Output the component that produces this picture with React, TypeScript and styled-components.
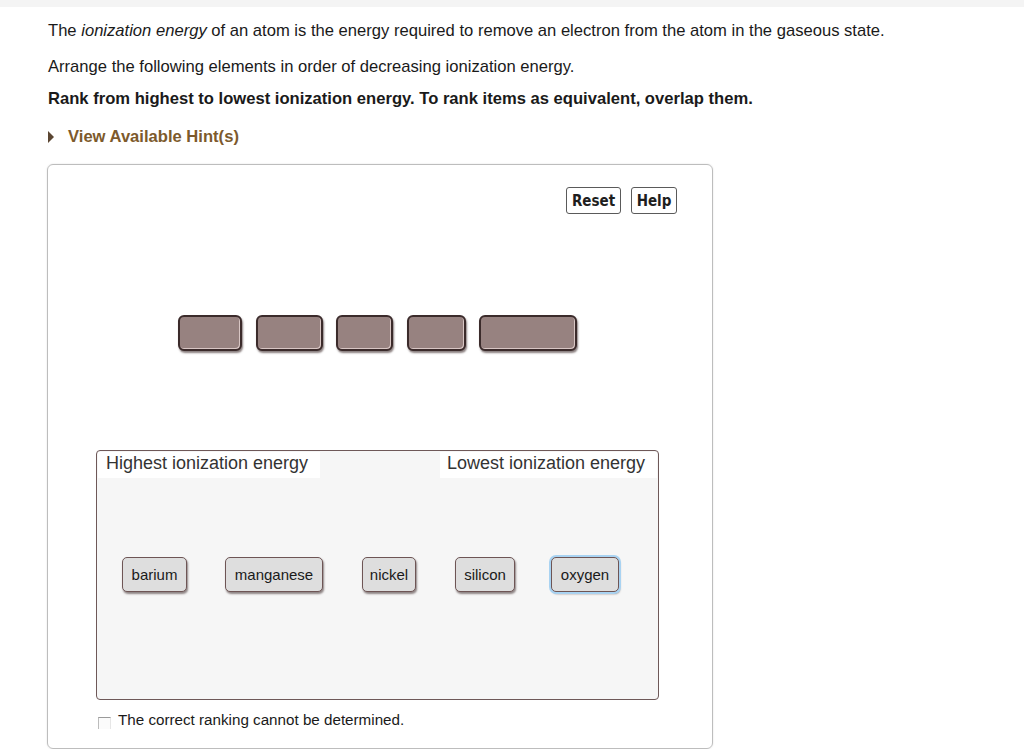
import React, { useState } from "react";
import styled, { createGlobalStyle } from "styled-components";

const GlobalStyle = createGlobalStyle`
  html, body {
    margin: 0;
    padding: 0;
    background: #ffffff;
    font-family: "Liberation Sans", Arial, Helvetica, sans-serif;
    color: #1a1a1a;
  }
`;

const TopBand = styled.div`
  height: 7px;
  background: #f4f4f4;
`;

const Content = styled.div`
  padding: 13px 0 0 48px;
`;

const Para = styled.p<{ $bold?: boolean; $gap?: number }>`
  margin: 0 0 ${(p) => p.$gap ?? 0}px;
  font-size: 16.6px;
  line-height: 22px;
  font-weight: ${(p) => (p.$bold ? "bold" : "normal")};
`;

const HintToggle = styled.button`
  display: flex;
  align-items: center;
  gap: 14px;
  margin: 0 0 16px;
  padding: 0;
  border: none;
  background: none;
  font-family: "Liberation Sans", Arial, sans-serif;
  font-size: 16.6px;
  font-weight: bold;
  color: #7d5a2c;
  line-height: 22px;
  cursor: pointer;
`;

const Triangle = styled.span`
  width: 0;
  height: 0;
  border-top: 6px solid transparent;
  border-bottom: 6px solid transparent;
  border-left: 6px solid #5b4632;
`;

const Panel = styled.div`
  margin-left: -1px;
  width: 666px;
  height: 585px;
  border: 1px solid #bdbdbd;
  border-radius: 6px;
  box-shadow: 0 0 2px rgba(0, 0, 0, 0.12);
  display: flex;
  flex-direction: column;
  box-sizing: border-box;
`;

const ToolRow = styled.div`
  display: flex;
  justify-content: flex-end;
  gap: 10px;
  padding: 22px 35px 0 0;
`;

const ToolButton = styled.button<{ $w: number }>`
  width: ${(p) => p.$w}px;
  height: 27px;
  padding: 0;
  border: 1px solid #5a5a5a;
  border-radius: 3px;
  background: #ffffff;
  font-family: "Liberation Sans Narrow", "DejaVu Sans Condensed", "Liberation Sans", sans-serif;
  font-weight: bold;
  font-size: 15px;
  color: #1e1e1e;
  cursor: pointer;
`;

const SlotRow = styled.div`
  display: flex;
  gap: 13.5px;
  padding: 101px 0 0 130px;
`;

const Slot = styled.div<{ $w: number }>`
  width: ${(p) => p.$w}px;
  height: 36px;
  box-sizing: border-box;
  background: #978280;
  border: 2px solid #3b2b2b;
  border-radius: 6px;
  box-shadow: 1px 2px 2px rgba(40, 20, 20, 0.55), inset -1px -1px 0 #d8c6c4;
`;

const Zone = styled.div`
  margin: 99px 0 0 48px;
  width: 563px;
  height: 250px;
  box-sizing: border-box;
  border: 1px solid #6e5858;
  border-radius: 4px;
  background: #f6f6f6;
  display: flex;
  flex-direction: column;
`;

const LabelRow = styled.div`
  display: flex;
  justify-content: space-between;
  padding: 1px 1px 0 1px;
`;

const ZoneLabel = styled.div<{ $w: number; $pad: number }>`
  width: ${(p) => p.$w}px;
  box-sizing: border-box;
  padding-left: ${(p) => p.$pad}px;
  height: 26px;
  line-height: 23px;
  background: #ffffff;
  font-size: 18px;
  color: #333333;
  white-space: nowrap;
`;

const ItemRow = styled.div`
  display: flex;
  padding: 79px 0 0 25px;
`;

const Item = styled.button<{ $w: number; $x: number; $focus?: boolean }>`
  width: ${(p) => p.$w}px;
  margin-left: ${(p) => p.$x}px;
  height: 35px;
  padding: 0;
  box-sizing: border-box;
  background: #dedede;
  border: 1px solid #6e5555;
  border-radius: 5px;
  font-family: "Liberation Sans", Arial, sans-serif;
  font-size: 15px;
  color: #1a1a1a;
  cursor: grab;
  box-shadow: ${(p) =>
    p.$focus
      ? "0 0 0 2px #a9d3f2, 1px 2px 2px rgba(40, 20, 20, 0.5)"
      : "1px 2px 2px rgba(40, 20, 20, 0.5)"};
`;

const CheckRow = styled.label`
  display: flex;
  align-items: center;
  gap: 7px;
  margin: 9px 0 0 50px;
  font-size: 15.2px;
  color: #1a1a1a;
  cursor: pointer;
`;

const CheckBox = styled.span<{ $on: boolean }>`
  width: 11px;
  height: 11px;
  margin-top: 8px;
  border-top: 1px solid #9a9a9a;
  border-left: 1px solid #bcbcbc;
  border-right: 1px solid #e6e6e6;
  background: ${(p) => (p.$on ? "#8aa" : "#fbfbfb")};
`;

const slots = [64, 67, 57, 59, 98];
const elements = [
  { name: "barium", w: 65, gap: 0 },
  { name: "manganese", w: 98, gap: 38 },
  { name: "nickel", w: 54, gap: 39 },
  { name: "silicon", w: 60, gap: 39 },
  { name: "oxygen", w: 68, gap: 36 },
];

const App: React.FC = () => {
  const [cannot, setCannot] = useState(false);

  return (
    <>
      <GlobalStyle />
      <TopBand />
      <Content>
        <Para $gap={14}>
          The <i>ionization energy</i> of an atom is the energy required to
          remove an electron from the atom in the gaseous state.
        </Para>
        <Para $gap={10}>
          Arrange the following elements in order of decreasing ionization
          energy.
        </Para>
        <Para $bold $gap={16}>
          Rank from highest to lowest ionization energy. To rank items as
          equivalent, overlap them.
        </Para>
        <HintToggle>
          <Triangle />
          View Available Hint(s)
        </HintToggle>

        <Panel>
          <ToolRow>
            <ToolButton $w={55}>Reset</ToolButton>
            <ToolButton $w={46}>Help</ToolButton>
          </ToolRow>

          <SlotRow>
            {slots.map((w, i) => (
              <Slot key={i} $w={w} />
            ))}
          </SlotRow>

          <Zone>
            <LabelRow>
              <ZoneLabel $w={222} $pad={8}>
                Highest ionization energy
              </ZoneLabel>
              <ZoneLabel $w={217} $pad={7}>
                Lowest ionization energy
              </ZoneLabel>
            </LabelRow>
            <ItemRow>
              {elements.map((el) => (
                <Item
                  key={el.name}
                  $w={el.w}
                  $x={el.gap}
                  $focus={el.name === "oxygen"}
                >
                  {el.name}
                </Item>
              ))}
            </ItemRow>
          </Zone>

          <CheckRow onClick={() => setCannot(!cannot)}>
            <CheckBox $on={cannot} />
            The correct ranking cannot be determined.
          </CheckRow>
        </Panel>
      </Content>
    </>
  );
};

export default App;
